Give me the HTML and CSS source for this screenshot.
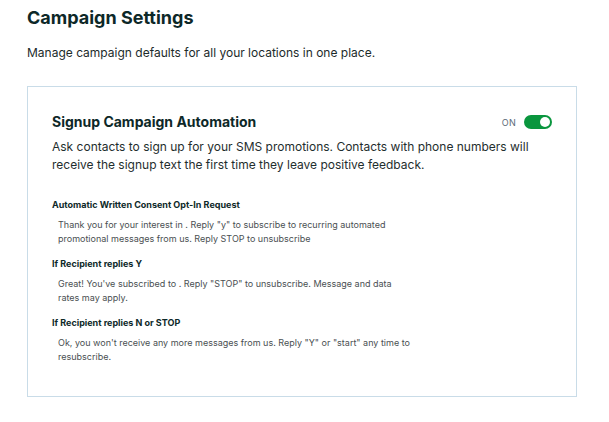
FILE: index.html
```html
<!DOCTYPE html>
<html lang="en">
<head>
<meta charset="utf-8">
<title>Campaign Settings</title>
<link rel="stylesheet" href="styles.css">
</head>
<body>
<main class="page">
  <h1 class="page-title">Campaign Settings</h1>
  <p class="page-sub">Manage campaign defaults for all your locations in one place.</p>
  <section class="card">
    <div class="card-head">
      <h2 class="card-title">Signup Campaign Automation</h2>
      <div class="toggle-wrap">
        <span class="toggle-label">ON</span>
        <span class="toggle"><span class="knob"></span></span>
      </div>
    </div>
    <p class="card-desc">Ask contacts to sign up for your SMS promotions. Contacts with phone numbers will receive the signup text the first time they leave positive feedback.</p>
    <div class="msgs">
      <div class="msg">
        <h3 class="msg-title">Automatic Written Consent Opt-In Request</h3>
        <p class="msg-body">Thank you for your interest in . Reply "y" to subscribe to recurring automated promotional messages from us. Reply STOP to unsubscribe</p>
      </div>
      <div class="msg">
        <h3 class="msg-title">If Recipient replies Y</h3>
        <p class="msg-body">Great! You've subscribed to . Reply "STOP" to unsubscribe. Message and data rates may apply.</p>
      </div>
      <div class="msg">
        <h3 class="msg-title">If Recipient replies N or STOP</h3>
        <p class="msg-body">Ok, you won't receive any more messages from us. Reply "Y" or "start" any time to resubscribe.</p>
      </div>
    </div>
  </section>
</main>
</body>
</html>
```

FILE: styles.css
```css
* { box-sizing: border-box; }
html, body { margin: 0; padding: 0; background: #fff; }
body { font-family: Inter, "Noto Sans", sans-serif; color: #0f2a2a; }
.page { padding: 5px 0 0 27px; width: 577px; }
.page-title { margin: 0; font-size: 18px; font-weight: 700; line-height: 26px; color: #0d2828; }
.page-sub { margin: 13px 0 0; font-size: 12px; line-height: 18px; color: #1c2b2b; }
.card { margin-top: 24px; border: 1px solid #c9dce8; padding: 26px 24px 40px; height: 311px; }
.card-head { display: flex; align-items: center; justify-content: space-between; }
.card-title { margin: 0; font-size: 14px; font-weight: 700; line-height: 18px; color: #0d2828; }
.toggle-wrap { display: flex; align-items: center; gap: 8px; }
.toggle-label { font-size: 9px; color: #5b6b78; letter-spacing: 0.3px; }
.toggle { width: 28px; height: 14px; border-radius: 7px; background: #0a963e; display: flex; align-items: center; justify-content: flex-end; padding: 2px; }
.knob { width: 10px; height: 10px; border-radius: 50%; background: #fff; }
.card-desc { margin: 7px 0 0; font-size: 12px; line-height: 18px; color: #1f2e2e; max-width: 490px; }
.msgs { margin-top: 25px; display: flex; flex-direction: column; gap: 12px; }
.msg-title { margin: 0; font-size: 9px; font-weight: 700; line-height: 12px; color: #0d2828; }
.msg-body { margin: 7px 0 0 6px; font-size: 9px; line-height: 14px; color: #4a4f52; max-width: 352px; }
```
